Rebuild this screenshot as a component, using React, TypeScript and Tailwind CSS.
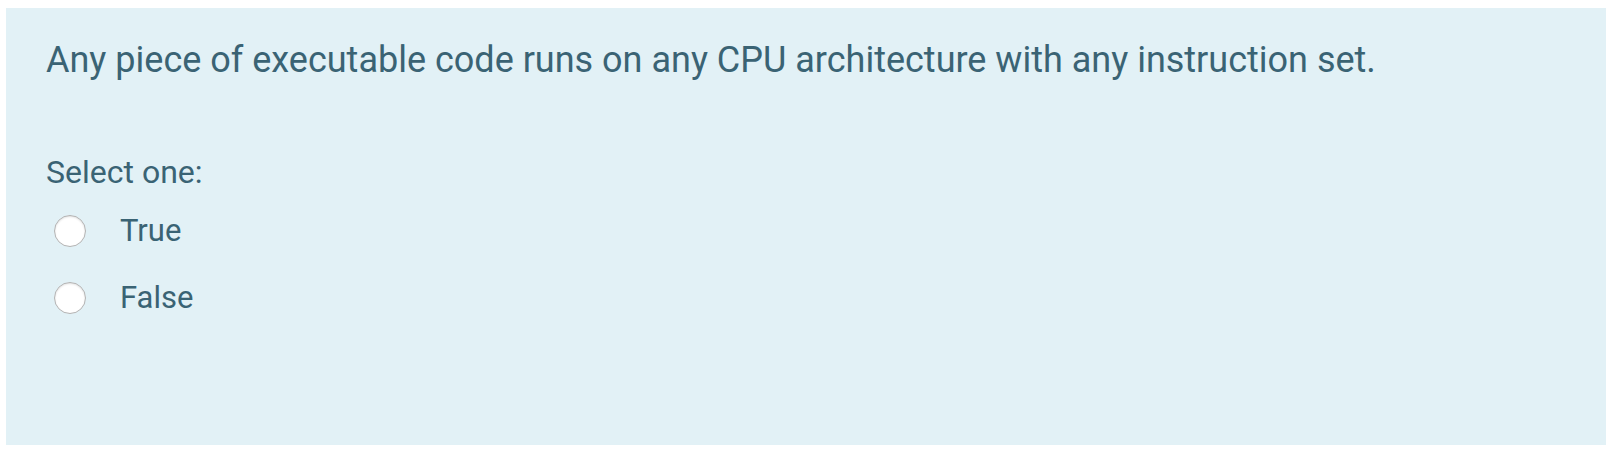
import React, { useState } from 'react';

const OPTIONS = ['True', 'False'];

const App: React.FC = () => {
  const [picked, setPicked] = useState<string | null>(null);

  return (
    <div className="min-h-[454px] bg-white pt-[8px] pl-[6px]" style={{ fontFamily: 'Roboto, "Noto Sans", sans-serif' }}>
      <div className="w-[1600px] h-[437px] bg-[#e2f1f6] pl-[40px] pt-[31px] text-[#3a6374]">
        <div className="text-[36px] leading-[43px]">
          Any piece of executable code runs on any CPU architecture with any instruction set.
        </div>

        <div className="mt-[71px] text-[32px] leading-[38px]">Select one:</div>

        <div className="mt-[21px] flex flex-col gap-[29px]">
          {OPTIONS.map(opt => (
            <label key={opt} className="flex items-center h-[38px] cursor-pointer" onClick={() => setPicked(opt)}>
              <span className="ml-[8px] w-[32px] h-[32px] rounded-full bg-white border border-[#b3b3b3] shadow-[inset_0_1px_2px_rgba(0,0,0,0.12)] flex items-center justify-center">
                {picked === opt && <span className="w-[14px] h-[14px] rounded-full bg-[#3a6374]"></span>}
              </span>
              <span className="ml-[34px] text-[31px] leading-[38px]">{opt}</span>
            </label>
          ))}
        </div>
      </div>
    </div>
  );
};

export default App;
